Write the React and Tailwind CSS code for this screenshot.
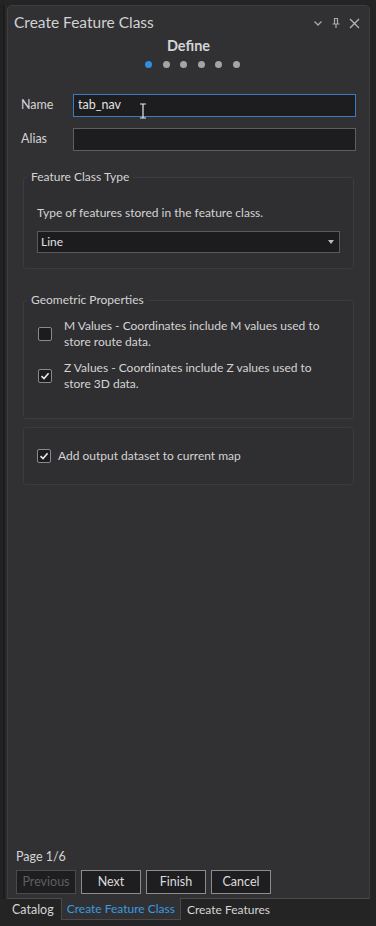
import React from "react";

const F = { fontFamily: 'Lato, "Noto Sans", sans-serif' };

function Check({ checked }) {
  return (
    <div className="w-[14px] h-[14px] shrink-0 rounded-[2px] border border-[#8a8a8a] bg-[#1c1c1e] flex items-center justify-center">
      {checked && (
        <svg width="10" height="10" viewBox="0 0 10 10">
          <path d="M1.5 5.2 L4 7.6 L8.6 2.2" fill="none" stroke="#e6e6e6" strokeWidth="1.6" />
        </svg>
      )}
    </div>
  );
}

function Btn({ children, disabled }) {
  return (
    <div
      className={
        "w-[60px] h-[24px] flex items-center justify-center text-[12.5px] bg-[#1e1e20] border " +
        (disabled ? "border-[#4a4a4a] text-[#5f5f5f]" : "border-[#8c8c8c] text-[#dcdcdc]")
      }
    >
      {children}
    </div>
  );
}

export default function App() {
  return (
    <div className="w-[376px] h-[926px] bg-[#242424] flex flex-col text-[#d4d4d4]" style={F}>
      <div className="flex flex-1 min-h-0">
        <div className="w-[7px] flex pt-[5px]">
          <div className="w-[3px] bg-[#222]"></div>
          <div className="w-[2px] bg-[#1c1c1c]"></div>
          <div className="w-[2px] bg-[#2a2a2a]"></div>
        </div>
        <div className="mt-[5px] w-[363px] border border-[#3e3e40] border-b-[#4a4a4c] rounded-t-[5px] bg-[#313133] flex flex-col">
          <div className="flex items-center h-[33px] pl-[6px] pr-[8px] pt-[1px]">
            <div className="text-[15.5px] text-[#d2d2d2] flex-1">Create Feature Class</div>
            <svg width="12" height="12" viewBox="0 0 12 12" className="mr-[6px]">
              <path d="M2.5 4.5 L6 8 L9.5 4.5" fill="none" stroke="#aaa" strokeWidth="1.3" />
            </svg>
            <svg width="12" height="12" viewBox="0 0 12 12" className="mr-[6px]">
              <path d="M4 1.5 H8 M4.5 1.5 V7 M7.5 1.5 V7 M2.5 7 H9.5 M6 7 V11" fill="none" stroke="#aaa" strokeWidth="1.2" />
            </svg>
            <svg width="13" height="13" viewBox="0 0 13 13">
              <path d="M2 2 L11 11 M11 2 L2 11" fill="none" stroke="#b4b4b4" strokeWidth="1.3" />
            </svg>
          </div>
          <div className="text-center text-[14.5px] font-bold text-[#d4d4d4] leading-[18px] -mt-[2px]">Define</div>
          <div className="flex justify-center gap-[10.5px] mt-[6px] ml-[8px]">
            {[0, 1, 2, 3, 4, 5].map((i) => (
              <div key={i} className={"w-[7px] h-[7px] rounded-full " + (i === 0 ? "bg-[#2f8ee0]" : "bg-[#a4a4a4]")}></div>
            ))}
          </div>

          <div className="flex items-center mt-[26px] pl-[13px]">
            <div className="w-[52px] text-[12.5px]">Name</div>
            <div className="relative w-[283px] h-[23px] bg-[#1d1d1f] border border-[#3b7cc0] flex items-center pl-[4px] text-[12.5px] text-[#e0e0e0]">
              tab_nav
              <svg width="8" height="16" viewBox="0 0 8 16" className="absolute left-[65px] top-[8px]">
                <path d="M1 1 H7 M4 1 V15 M1 15 H7" fill="none" stroke="#e8e8e8" strokeWidth="1.2" />
              </svg>
            </div>
          </div>
          <div className="flex items-center mt-[11px] pl-[13px]">
            <div className="w-[52px] text-[12.5px]">Alias</div>
            <div className="w-[283px] h-[23px] bg-[#1d1d1f] border border-[#5e5e5e]"></div>
          </div>

          <fieldset className="mx-[15px] mt-[18px] border border-[#3c3c3e] rounded-[3px] bg-[#2f2f31] h-[100px] px-[13px]">
            <legend className="ml-[-10px] px-[4px] text-[12px] leading-[16px]">Feature Class Type</legend>
            <div className="text-[12px] leading-[16px] mt-[20px]">Type of features stored in the feature class.</div>
            <div className="mt-[10px] h-[22px] bg-[#1c1c1e] border border-[#5a5a5a] flex items-center pl-[3px] pr-[5px] text-[12px] text-[#e0e0e0]">
              <span className="flex-1">Line</span>
              <svg width="6" height="4" viewBox="0 0 6 4">
                <path d="M0 0 H6 L3 4 Z" fill="#bbb" />
              </svg>
            </div>
          </fieldset>

          <fieldset className="mx-[15px] mt-[23px] border border-[#3c3c3e] rounded-[3px] bg-[#2f2f31] h-[127px] px-[14px]">
            <legend className="ml-[-11px] px-[4px] text-[12px] leading-[16px]">Geometric Properties</legend>
            <div className="flex items-center gap-[12px] mt-[10px]">
              <Check />
              <div className="text-[12px] leading-[16px] whitespace-nowrap">
                M Values - Coordinates include M values used to<br />store route data.
              </div>
            </div>
            <div className="flex items-center gap-[12px] mt-[10px]">
              <Check checked />
              <div className="text-[12px] leading-[16px] whitespace-nowrap">
                Z Values - Coordinates include Z values used to<br />store 3D data.
              </div>
            </div>
          </fieldset>

          <div className="mx-[15px] mt-[8px] border border-[#3c3c3e] rounded-[3px] bg-[#2f2f31] h-[58px] flex items-center pl-[13px] gap-[7px]">
            <Check checked />
            <div className="text-[12px]">Add output dataset to current map</div>
          </div>

          <div className="flex-1"></div>
          <div className="pl-[8px] text-[12.5px] leading-[16px]">Page 1/6</div>
          <div className="flex gap-[5px] pl-[8px] mt-[5px] mb-[4px]">
            <Btn disabled>Previous</Btn>
            <Btn>Next</Btn>
            <Btn>Finish</Btn>
            <Btn>Cancel</Btn>
          </div>
        </div>
      </div>
      <div className="flex h-[27px] pl-[12px] text-[12.5px] items-start">
        <div className="h-[22px] flex items-center pr-[7px]">Catalog</div>
        <div className="h-[22px] flex items-center px-[5px] bg-[#313133] border border-t-0 border-[#4a4a4c] text-[#3a9be0] text-[12px] -mt-[1px]">Create Feature Class</div>
        <div className="h-[22px] flex items-center pl-[6px] text-[12px]">Create Features</div>
      </div>
    </div>
  );
}
